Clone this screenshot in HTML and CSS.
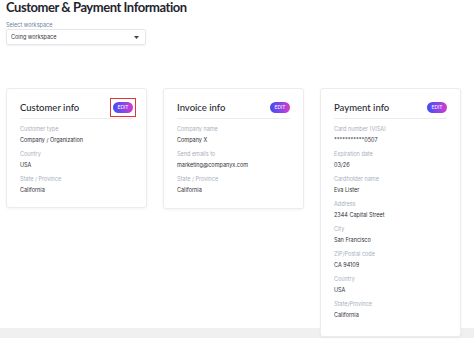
FILE: index.html
```html
<!DOCTYPE html>
<html>
<head>
<meta charset="utf-8">
<link rel="stylesheet" href="styles.css">
</head>
<body>
<div class="page">
  <h1 class="title">Customer &amp; Payment Information</h1>
  <div class="ws-label">Select workspace</div>
  <div class="select">
    <span>Coing workspace</span>
    <svg class="chev" width="5" height="3" viewBox="0 0 5 3"><path d="M0 0 L5 0 L2.5 3 Z" fill="#444"/></svg>
  </div>
  <div class="cards">
    <div class="card">
      <div class="card-head">
        <div class="card-title">Customer info</div>
        <span class="mark"><button class="edit">EDIT</button></span>
      </div>
      <div class="field"><div class="label">Customer type</div><div class="value">Company / Organization</div></div>
      <div class="field"><div class="label">Country</div><div class="value">USA</div></div>
      <div class="field"><div class="label">State / Province</div><div class="value">California</div></div>
    </div>
    <div class="card card-2">
      <div class="card-head">
        <div class="card-title">Invoice info</div>
        <button class="edit">EDIT</button>
      </div>
      <div class="field"><div class="label">Company name</div><div class="value">Company X</div></div>
      <div class="field"><div class="label">Send emails to</div><div class="value">marketing@companyx.com</div></div>
      <div class="field"><div class="label">State / Province</div><div class="value">California</div></div>
    </div>
    <div class="card card-3">
      <div class="card-head">
        <div class="card-title">Payment info</div>
        <button class="edit">EDIT</button>
      </div>
      <div class="field"><div class="label">Card number (VISA)</div><div class="value">***********0507</div></div>
      <div class="field"><div class="label">Expiration date</div><div class="value">03/26</div></div>
      <div class="field"><div class="label">Cardholder name</div><div class="value">Eva Lister</div></div>
      <div class="field"><div class="label">Address</div><div class="value">2344 Capital Street</div></div>
      <div class="field"><div class="label">City</div><div class="value">San Francisco</div></div>
      <div class="field"><div class="label">ZIP/Postal code</div><div class="value">CA 94109</div></div>
      <div class="field"><div class="label">Country</div><div class="value">USA</div></div>
      <div class="field"><div class="label">State/Province</div><div class="value">California</div></div>
    </div>
  </div>
</div>
<div class="footer-band"></div>
</body>
</html>
```

FILE: styles.css
```css
html, body {
  margin: 0;
  padding: 0;
  background: #ffffff;
}
body {
  width: 474px;
  height: 343px;
  overflow: hidden;
  font-family: Inter, "Noto Sans", sans-serif;
  color: #2b2b33;
}
.page {
  padding: 0 13px 0 6px;
  height: 328px;
}
.title {
  margin: 0;
  font-family: Lato, Inter, sans-serif;
  font-weight: 700;
  font-size: 13px;
  line-height: 14px;
  color: #24242e;
  letter-spacing: -0.45px;
}
.ws-label {
  margin-top: 7.5px;
  font-size: 5.5px;
  line-height: 7px;
  color: #6c7f9c;
}
.select {
  margin-top: 0.5px;
  width: 140px;
  height: 16px;
  box-sizing: border-box;
  border: 1px solid #e6e7ea;
  border-radius: 2px;
  box-shadow: 0 1px 2px rgba(0,0,0,0.06);
  display: flex;
  align-items: center;
  justify-content: space-between;
  padding: 0 6px 0 4px;
  font-size: 5.5px;
  color: #33333a;
}
.chev { display: block; }
.cards {
  margin-top: 43px;
  display: flex;
  gap: 16px;
  align-items: flex-start;
}
.card {
  width: 141px;
  box-sizing: border-box;
  border: 1px solid #ececef;
  border-radius: 3px;
  box-shadow: 0 1px 3px rgba(0,0,0,0.05);
  padding: 12px 13px 13px 13px;
  background: #fff;
}
.card-2 { padding-bottom: 14px; }
.card-3 { padding-bottom: 17px; }
.card-head {
  display: flex;
  justify-content: space-between;
  align-items: center;
  height: 12px;
  padding-bottom: 5px;
  border-bottom: 1px solid #ececef;
  margin-bottom: 4px;
}
.card-title {
  font-family: Lato, Inter, sans-serif;
  font-size: 9.5px;
  font-weight: 500;
  color: #2a2a33;
}
.edit {
  display: block;
  width: 20px;
  height: 11px;
  border: none;
  border-radius: 5.5px;
  padding: 0;
  background: linear-gradient(90deg, #3e4ff2 0%, #8d44e6 55%, #d53cc9 100%);
  color: #fff;
  font-family: Inter, sans-serif;
  font-size: 5px;
  line-height: 11px;
  text-align: center;
}
.mark {
  display: block;
  padding: 3px 2px;
  margin: -4px -3px;
  border: 1px solid #e0363a;
}
.field {
  padding-top: 3px;
}
.field + .field {
  padding-top: 7px;
}
.label {
  font-size: 5.5px;
  line-height: 7px;
  color: #a8afbd;
}
.value {
  margin-top: 4px;
  font-size: 5.5px;
  line-height: 7px;
  color: #2e2e36;
}
.footer-band {
  height: 10px;
  background: #f0f0f1;
}
```
